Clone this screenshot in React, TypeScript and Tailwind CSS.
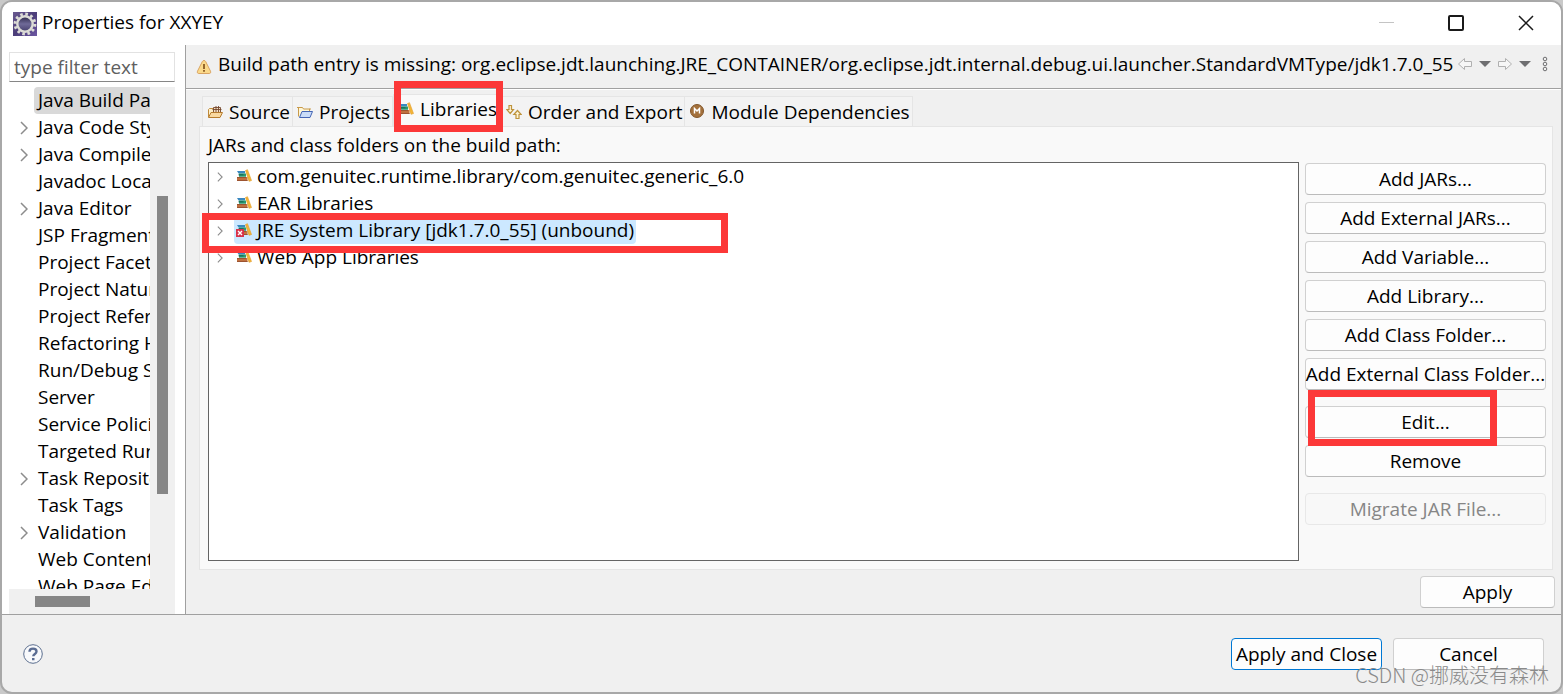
import { useState } from 'react';
import type { ReactNode } from 'react';

const pages = [
  { name: 'Java Build Path', selected: true },
  { name: 'Java Code Style', expandable: true },
  { name: 'Java Compiler', expandable: true },
  { name: 'Javadoc Location' },
  { name: 'Java Editor', expandable: true },
  { name: 'JSP Fragment' },
  { name: 'Project Facets' },
  { name: 'Project Natures' },
  { name: 'Project References' },
  { name: 'Refactoring History' },
  { name: 'Run/Debug Settings' },
  { name: 'Server' },
  { name: 'Service Policies' },
  { name: 'Targeted Runtimes' },
  { name: 'Task Repository', expandable: true },
  { name: 'Task Tags' },
  { name: 'Validation', expandable: true },
  { name: 'Web Content Settings' },
  { name: 'Web Page Editor' },
];

const libraries = [
  { name: 'com.genuitec.runtime.library/com.genuitec.generic_6.0' },
  { name: 'EAR Libraries' },
  { name: 'JRE System Library [jdk1.7.0_55] (unbound)', broken: true },
  { name: 'Web App Libraries' },
];

const EclipseIcon = () => (
  <svg className="size-6 shrink-0" viewBox="0 0 24 24" aria-hidden="true">
    <defs>
      <linearGradient id="gear-back" x1="0" y1="0" x2="1" y2="1">
        <stop offset="0" stopColor="#6a5a90" />
        <stop offset="0.5" stopColor="#4b3d78" />
        <stop offset="1" stopColor="#6d57a3" />
      </linearGradient>
      <linearGradient id="gear-core" x1="0" y1="0" x2="0" y2="1">
        <stop offset="0" stopColor="#2c2748" />
        <stop offset="0.5" stopColor="#6f6a98" />
        <stop offset="1" stopColor="#453e6c" />
      </linearGradient>
    </defs>
    <rect width="24" height="24" fill="url(#gear-back)" />
    <circle cx="12" cy="12" r="9.900" fill="none" stroke="#dcdcd6" strokeWidth="3" strokeDasharray="2.600 2.583" />
    <circle cx="12" cy="12" r="7.700" fill="url(#gear-core)" stroke="#dcdcd6" strokeWidth="2.400" />
  </svg>
);

const WarningIcon = () => (
  <svg className="size-4 shrink-0" viewBox="0 0 16 16" aria-hidden="true">
    <path d="M8 1.500c.8 0 1.300.4 1.700 1.100l4.800 9.600c.6 1.300 0 2.300-1.300 2.300H2.800c-1.300 0-1.900-1-1.300-2.300l4.800-9.600C6.700 1.900 7.200 1.500 8 1.500z" fill="#fbd98a" stroke="#d9a463" />
    <path d="M8 5v5" stroke="#8a5a22" strokeWidth="1.800" />
    <path d="M8 11v1.800" stroke="#8a5a22" strokeWidth="1.800" />
  </svg>
);

const SourceIcon = () => (
  <svg className="size-4 shrink-0" viewBox="0 0 16 16" aria-hidden="true">
    <path d="M1.500 13V5.500l1-1H6l1 1h6V8" fill="#fdf0c9" stroke="#c08a3a" />
    <path d="M6.500 3.500h7v5h-7zM5.500 5.500h9M9 2v6.500M11.500 2v6.500" fill="#f2dfc6" stroke="#75472c" strokeWidth="0.900" />
    <path d="M1.500 13.500L4 8.500h11.500l-2.500 5z" fill="#f9d9a0" stroke="#b67c2d" />
  </svg>
);

const ProjectsIcon = () => (
  <svg className="size-4 shrink-0" viewBox="0 0 16 16" aria-hidden="true">
    <path d="M1.500 12.500v-9h4l1 1.500h6v3" fill="#fff7d6" stroke="#c89a4b" />
    <path d="M0 3.500h2M12 5h2" stroke="#c89a4b" />
    <path d="M2.500 13.500L5 7.500h10.500L13 13.500z" fill="#c9dcf8" stroke="#4465b4" />
  </svg>
);

const LibraryIcon = ({ broken = false }: { broken?: boolean }) => (
  <svg className="size-4 shrink-0" viewBox="0 0 16 16" aria-hidden="true">
    <path d="M1 3h8v2.500H2.500z" fill="#3a88c0" />
    <path d="M3 5.500h7v3.200H3z" fill="#2a9a6f" />
    <path d="M2.500 6.800h5" stroke="#166452" />
    <path d="M1 9h10.500v4H1z" fill="#c0703f" />
    <path d="M1 9.500h9M1 12.500h10.500" stroke="#9c5330" />
    <path d="M9.500 2.500l2-.8L15.500 12.500l-2.500.8z" fill="#f3b536" stroke="#e09a28" strokeWidth="0.600" />
    {broken && (
      <>
        <rect y="7" width="8" height="8" fill="#d8324a" />
        <path d="M2 9l4 4M6 9l-4 4" stroke="#fff" strokeWidth="1.400" />
      </>
    )}
  </svg>
);

const OrderIcon = () => (
  <svg className="size-4 shrink-0" viewBox="0 0 16 16" aria-hidden="true">
    <path d="M3 1.500h2.500v4h2L4.200 9.500.8 5.500H3z" fill="#fdf3d2" stroke="#be933c" strokeWidth="1.200" />
    <path d="M10 14.500h3v-4h2.200L11.500 6.500l-3.700 4H10z" fill="#fdf3d2" stroke="#be933c" strokeWidth="1.200" />
  </svg>
);

const ModuleIcon = () => (
  <svg className="mb-0.5 size-4 shrink-0" viewBox="0 0 16 16" aria-hidden="true">
    <circle cx="8" cy="8" r="6.500" fill="#a4713c" stroke="#83572b" />
    <path d="M5.500 10.500v-5L8 8l2.500-2.500v5" fill="none" stroke="#fff" strokeWidth="1.500" />
  </svg>
);

const Chevron = ({ className }: { className: string }) => (
  <svg className={className} viewBox="0 0 8 14" fill="none" aria-hidden="true">
    <path d="M1 1l6 6-6 6" stroke="#8c8c8c" strokeWidth="1.500" />
  </svg>
);

const ArrowIcon = ({ className = '' }: { className?: string }) => (
  <svg className={`h-3.5 w-4 ${className}`} viewBox="0 0 16 14" aria-hidden="true">
    <path d="M1.500 7l6-5.500V4.500h7v5h-7v3z" fill="#f6f6f6" stroke="#b0b0b0" />
  </svg>
);

const DropIcon = () => (
  <svg className="h-1.5 w-3" viewBox="0 0 12 6" aria-hidden="true">
    <path d="M0 0h12L6 6z" fill="#6e6e70" />
  </svg>
);

/* red annotation frame, laid over whatever it points at */
const Marker = ({ className }: { className: string }) => (
  <div className={`pointer-events-none absolute z-10 border-7 border-[#fc3838] ${className}`} />
);

const PushButton = ({ children, className = '', disabled = false }: { children: ReactNode; className?: string; disabled?: boolean }) => (
  <button
    type="button"
    disabled={disabled}
    className={`flex h-8 items-center justify-center whitespace-nowrap rounded border border-[#d0d0d0] border-b-[#bbb] bg-[#fdfdfd] disabled:border-[#e8e8e8] disabled:bg-[#f8f8f8] disabled:text-[#868686] ${className}`}
  >
    {children}
  </button>
);

const Tab = ({ icon, label, selected = false, children }: { icon: ReactNode; label: string; selected?: boolean; children?: ReactNode }) => (
  <div
    role="presentation"
    className={
      selected
        ? 'relative h-8 border-x border-t border-[#e5e5e5] bg-[#f9f9f9] pb-1 pr-0.5'
        : 'h-[30px] border-r border-t border-[#e5e5e5] bg-[#f3f3f3] first:border-l'
    }
  >
    <button type="button" role="tab" aria-selected={selected} className="flex h-full items-center gap-1.5 whitespace-nowrap pl-1 pr-0.5">
      {icon}
      {label}
    </button>
    {children}
  </div>
);

const Sidebar = () => {
  const [filter, setFilter] = useState('');

  return (
    <aside className="flex w-[184px] shrink-0 flex-col border-r border-[#a0a0a0] bg-white pl-[7px] pr-2.5 pt-[7px]">
      <input
        type="text"
        aria-label="Filter pages"
        placeholder="type filter text"
        value={filter}
        onChange={(e) => setFilter(e.target.value)}
        className="h-[30px] w-full border border-[#e2e2e2] border-b-[#868686] bg-white px-1 outline-none placeholder:text-[#606060]"
      />
      <div className="mt-[5px] flex min-h-0 flex-1">
        <ul className="min-w-0 flex-1 overflow-hidden">
          {pages.map((page) => (
            <li key={page.name} className="flex h-[27px] items-center">
              <span className="flex w-[25px] shrink-0 justify-center pl-1">
                {page.expandable && <Chevron className="h-3.5 w-2" />}
              </span>
              <span className={`h-full flex-1 overflow-hidden whitespace-nowrap pl-1 leading-[27px] ${page.selected ? 'rounded-l bg-[#d9d9d9]' : ''}`}>
                {page.name}
              </span>
            </li>
          ))}
        </ul>
        <div className="w-[25px] bg-[#f0f0f0] pl-[7px] pt-[109px]">
          <div className="h-[298px] w-[11px] bg-[#868686]" />
        </div>
      </div>
      <div className="h-[25px] shrink-0 bg-[#f0f0f0] pl-[26px] pt-[7px]">
        <div className="h-[11px] w-[55px] bg-[#868686]" />
      </div>
    </aside>
  );
};

const App = () => {
  return (
    <div className="h-screen overflow-hidden bg-[#c9c9c9] font-['Open_Sans','Noto_Sans_CJK_SC',sans-serif] text-[19px] leading-6 text-black">
      <div className="relative flex h-full flex-col overflow-hidden rounded-xl border-2 border-[#a8a8a8] bg-[#f0f0f0]">
        <header className="flex h-[43px] shrink-0 items-center bg-white pl-[11px] pr-[27px]">
          <EclipseIcon />
          <h1 className="ml-[5px] flex-1 pb-1">Properties for XXYEY</h1>
          <div className="flex items-center gap-[54px] pb-0.5">
            <button type="button" aria-label="Minimize" disabled className="h-px w-[15px] bg-[#c4c4c4]" />
            <button type="button" aria-label="Maximize" className="size-4 rounded-xs border-2 border-[#1a1a1a]" />
            <button type="button" aria-label="Close">
              <svg className="size-4" viewBox="0 0 16 16" aria-hidden="true">
                <path d="M1 1l14 14M15 1L1 15" stroke="#1a1a1a" strokeWidth="1.500" />
              </svg>
            </button>
          </div>
        </header>

        <div className="flex min-h-0 flex-1">
          <Sidebar />
          <main className="flex min-w-0 flex-1 flex-col">
            <div className="flex h-11 shrink-0 items-center border-b border-[#a0a0a0] pl-2.5 pr-3">
              <WarningIcon />
              <p className="ml-1.5 min-w-0 flex-1 whitespace-nowrap pb-1.5">
                Build path entry is missing: org.eclipse.jdt.launching.JRE_CONTAINER/org.eclipse.jdt.internal.debug.ui.launcher.StandardVMType/jdk1.7.0_55
              </p>
              <div className="flex shrink-0 items-center gap-1.5 pb-1.5">
                <button type="button" aria-label="Back"><ArrowIcon /></button>
                <button type="button" aria-label="Back history"><DropIcon /></button>
                <button type="button" aria-label="Forward"><ArrowIcon className="rotate-180" /></button>
                <button type="button" aria-label="Forward history"><DropIcon /></button>
                <button type="button" aria-label="View menu">
                  <svg className="ml-1 h-4 w-2" viewBox="0 0 8 16" fill="none" stroke="#6e6e70" aria-hidden="true">
                    <circle cx="4" cy="3" r="1.800" />
                    <circle cx="4" cy="8" r="1.800" />
                    <circle cx="4" cy="13" r="1.800" />
                  </svg>
                </button>
              </div>
            </div>

            <div className="flex min-h-0 flex-1 flex-col border-t border-white pb-1.5 pl-[13px] pr-2 pt-1">
              <div role="tablist" className="flex shrink-0 items-end pl-[3px]">
                <Tab icon={<SourceIcon />} label="Source" />
                <Tab icon={<ProjectsIcon />} label="Projects" />
                <Tab icon={<LibraryIcon />} label="Libraries" selected>
                  <Marker className="-bottom-1.5 -top-3.5 -right-0.5 left-0" />
                </Tab>
                <Tab icon={<OrderIcon />} label="Order and Export" />
                <Tab icon={<ModuleIcon />} label="Module Dependencies" />
              </div>

              <div className="flex min-h-0 flex-1 flex-col border border-[#e5e5e5] bg-[#f9f9f9] pb-2 pl-2 pr-1.5 pt-1.5">
                <h2 id="libs" className="mb-[5px]">JARs and class folders on the build path:</h2>
                <div className="flex min-h-0 flex-1 gap-1.5">
                  <ul aria-labelledby="libs" className="min-w-0 flex-1 border border-[#646464] bg-white">
                    {libraries.map((lib) => (
                      <li key={lib.name} className="relative flex h-[27px] items-center pl-2">
                        <Chevron className="h-2.5 w-1.5" />
                        <span className={`ml-[11px] flex h-full items-center gap-[5px] rounded-sm px-0.5 pb-0.5 ${lib.broken ? 'bg-[#cce8ff]' : ''}`}>
                          <LibraryIcon broken={lib.broken} />
                          {lib.name}
                        </span>
                        {lib.broken && <Marker className="-left-[7px] -top-1 h-10 w-[526px]" />}
                      </li>
                    ))}
                  </ul>
                  <div className="flex w-[241px] shrink-0 flex-col gap-[7px] pt-px">
                    <PushButton>Add JARs...</PushButton>
                    <PushButton>Add External JARs...</PushButton>
                    <PushButton>Add Variable...</PushButton>
                    <PushButton>Add Library...</PushButton>
                    <PushButton>Add Class Folder...</PushButton>
                    <PushButton>Add External Class Folder...</PushButton>
                    <div className="relative mt-[9px]">
                      <PushButton className="w-full">Edit...</PushButton>
                      <Marker className="-top-4 left-[3px] h-[56px] w-[189px]" />
                    </div>
                    <PushButton>Remove</PushButton>
                    <PushButton className="mt-[9px]" disabled>Migrate JAR File...</PushButton>
                  </div>
                </div>
              </div>

              <PushButton className="-mr-0.5 mt-1.5 w-[135px] shrink-0 self-end">Apply</PushButton>
            </div>
          </main>
        </div>

        <footer className="flex h-[78px] shrink-0 items-center border-t border-[#a0a0a0] pl-[21px] pr-[17px]">
          <button type="button" aria-label="Help">
            <svg className="size-5" viewBox="0 0 20 20" fill="none" aria-hidden="true">
              <circle cx="10" cy="10" r="9.300" fill="#f8f9fb" stroke="#5c6f8f" />
              <path d="M6.500 7.800c0-2.200 1.500-3.200 3.500-3.200s3.500 1 3.500 2.900c0 2.500-3.200 2.300-3.200 4.700" stroke="#5a6c92" strokeWidth="2.400" />
              <path d="M9 14h2.500v2.300H9z" fill="#5a6c92" />
            </svg>
          </button>
          <div className="ml-auto flex gap-[11px]">
            <PushButton className="w-[151px] border-[#0078d4]! bg-[#fdfdfd]">Apply and Close</PushButton>
            <PushButton className="w-[151px]">Cancel</PushButton>
          </div>
        </footer>

        <p className="absolute bottom-[5px] right-3 whitespace-nowrap font-['Noto_Sans_CJK_SC',sans-serif] text-xl font-light leading-6 text-[#8a8a8a]">
          CSDN @挪威没有森林
        </p>
      </div>
    </div>
  );
};

export default App;
